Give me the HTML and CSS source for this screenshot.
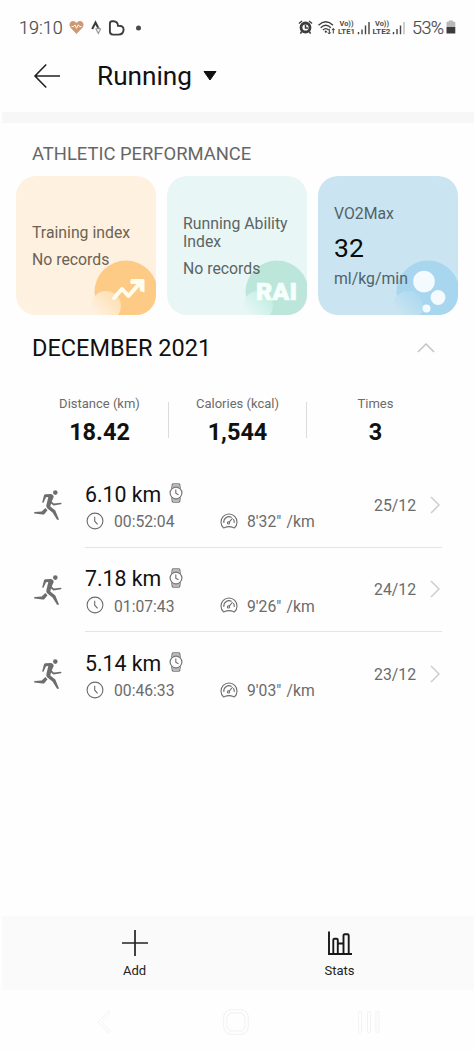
FILE: index.html
```html
<!DOCTYPE html>
<html lang="en">
<head>
<meta charset="utf-8">
<title>Running</title>
<link rel="stylesheet" href="styles.css">
</head>
<body>
<svg class="defs" width="0" height="0" aria-hidden="true">
  <symbol id="runner" viewBox="0 0 30 32">
    <circle cx="22.3" cy="3.6" r="2.3"/>
    <path d="M11 6.300 Q11.500 5.500 12.500 5.300 L17.500 5.100 Q20.500 5.400 20.700 8 L18.700 12.500 L20.800 14.600 L28 13.800 Q29 14.400 28 15.200 L20.500 16.400 L18 14.500 L17.300 17.500 L22.300 21.500 L25.900 30.300 Q25.300 31.400 23.900 30.500 L19.500 23.400 L14.400 19.400 Q12.700 17.700 13.500 15.500 L15.300 8 L13 8.300 L10.600 13.600 Q9.600 14.300 9.200 13.200 Z"/>
    <path d="M12.300 19 L14.500 21.300 L11.500 25 Q10.800 25.700 9.500 25.500 L1.300 24.500 Q.6 23.500 1.600 23 L8.700 22.600 Z"/>
  </symbol>
  <symbol id="watch" viewBox="0 0 14 20">
    <g fill="none" stroke="#777" stroke-width="1.200" stroke-linejoin="round">
      <circle cx="7" cy="10" r="5.900"/>
      <path d="M2.700 5.700 L3.300 1.500 Q3.500.8 4.300.8 H9.700 Q10.500.8 10.700 1.500 L11.300 5.700 M2.700 14.300 L3.300 18.500 Q3.500 19.200 4.300 19.200 H9.700 Q10.500 19.200 10.700 18.500 L11.300 14.300 M4 3 H10 M4 17 H10 M6.800 6.600 V10.200 L9.500 11.800"/>
    </g>
  </symbol>
  <symbol id="clock" viewBox="0 0 18 18">
    <g fill="none" stroke="#6c6c6c" stroke-width="1.100">
      <circle cx="9" cy="9" r="7.900"/>
      <path d="M8.700 4.700 V9.200 L11.600 12.300"/>
    </g>
  </symbol>
  <symbol id="gauge" viewBox="0 0 18 16">
    <g fill="none" stroke="#6c6c6c" stroke-width="1.100" stroke-linecap="round" stroke-linejoin="round">
      <path d="M3.500 14.800 A8 8 0 1 1 14.500 14.800 Q14 15.100 13.300 14.600 Q9 12.700 4.700 14.600 Q4 15.100 3.500 14.800 Z"/>
      <path d="M3.800 9.500 A5.300 5.300 0 0 1 11.300 4.200 M13.600 6.500 A5.300 5.300 0 0 1 14.200 9.500 M9.200 9.100 L12.300 5.500"/>
      <circle cx="8.500" cy="9.900" r="1.100"/>
    </g>
  </symbol>
  <symbol id="chevron" viewBox="0 0 10 18"><path d="M1 1 L9 9 L1 17" fill="none" stroke="#cdcdcd" stroke-width="1.500"/></symbol>
</svg>

<header class="status">
  <span class="time">19:10</span>
  <svg class="notices" width="76" height="20" viewBox="0 0 76 20">
    <path d="M7.500 16 L1.600 9.800 C-1 6 1.500 3 4 3 Q6.200 3 7.500 5 Q8.800 3 11 3 C13.500 3 16 6 13.400 9.800 Z" fill="#cf9872"/>
    <path d="M2.500 8.500 H4.500 L6 7 L7.500 10.300 L9.300 6.800 L10.500 8.500 H12.500" fill="none" stroke="#fff" stroke-width="1"/>
    <path d="M23.200 11 L26.500 4.500 L29.800 11" fill="none" stroke="#3d3d3d" stroke-width="2.100"/>
    <path d="M27 11 L29.300 15.500 L31.500 11 L29.300 10 Z" fill="none" stroke="#999" stroke-width="1.200"/>
    <path d="M40.900 5.600 Q40.900 3.200 43.300 3.200 H44.500 Q48.800 3.400 49 7.700 Q54.600 7.400 54.600 11.600 Q54.300 16.600 49.500 16.600 H44 Q40.900 16.600 40.900 13.500 Z" fill="none" stroke="#3d3d3d" stroke-width="1.900"/>
    <circle cx="69.500" cy="10" r="2.500" fill="#4a4a4a"/>
  </svg>
  <svg class="signals" width="108" height="18" viewBox="0 0 108 18">
    <g fill="none" stroke="#3d3d3d">
      <circle cx="7.500" cy="8.500" r="4.500" stroke-width="2.800"/>
      <path d="M7.500 5.800 V9 H10 M3.700 12.500 L2.400 14.700 M11.300 12.500 L12.600 14.700" stroke-width="1.500"/>
      <path d="M.9 4.500 L4 2 M11 2 L14.100 4.500" stroke-width="1.400"/>
      <path d="M20.500 6.200 Q27.800 -.7 35 6.200 M22.700 8.700 Q27.800 3.800 32.900 8.700 M24.900 11 Q27.800 8.200 30.700 11" stroke-width="1.300"/>
      <path d="M31.300 9.800 V15 M29.900 13.400 L31.300 15 L32.700 13.400 M35.300 14.500 V9.500 M33.900 11.100 L35.300 9.500 L36.700 11.100" stroke-width="1"/>
    </g>
    <circle cx="27.800" cy="12.700" r="1.100" fill="#3d3d3d"/>
    <g class="lte">
      <text x="41.500" y="6.900" textLength="14" lengthAdjust="spacingAndGlyphs">Vo))</text><text x="40" y="15.400" textLength="17" lengthAdjust="spacingAndGlyphs">LTE1</text>
      <text x="77" y="6.900" textLength="14" lengthAdjust="spacingAndGlyphs">Vo))</text><text x="74.500" y="15.400" textLength="18" lengthAdjust="spacingAndGlyphs">LTE2</text>
    </g>
    <path d="M60.500 15.300 V13 M64 15.300 V10.500 M67.500 15.300 V6.500 M71 15.300 V3 M95.500 15.300 V13 M99 15.300 V10 M102.500 15.300 V6.500" stroke="#444" stroke-width="1.400"/>
    <path d="M106 15.300 V3" stroke="#bbb" stroke-width="1.400"/>
  </svg>
  <span class="percent">53%</span>
  <svg class="battery" width="10" height="15" viewBox="0 0 10 15"><path d="M.5 7 V2.500 Q.5 1.700 1.300 1.700 H2.700 V.5 H7 V1.700 H8.500 Q9.300 1.700 9.300 2.500 V7 Z" fill="#b9b9b9"/><path d="M.5 7 H9.300 V13.500 H.5 Z" fill="#3c3c3c"/></svg>
</header>

<nav class="title-bar">
  <svg width="28" height="26" viewBox="0 0 28 26"><path d="M27 13 H2.200 M13.200 1.500 L2 13 L13.200 24.500" fill="none" stroke="#222" stroke-width="1.600"/></svg>
  <h1>Running</h1>
  <svg class="caret" width="14" height="10" viewBox="0 0 14 10"><path d="M1 .5 H13 L7 9 Z" fill="#111" stroke="#111" stroke-linejoin="round"/></svg>
</nav>
<div class="strip"></div>

<main>
  <h2 class="section">ATHLETIC PERFORMANCE</h2>
  <section class="cards">
    <article class="card training">
      <svg class="badge" width="64" height="64" viewBox="0 0 64 64">
        <defs><linearGradient id="warm" x1="1" y1="0" x2="0" y2="1"><stop offset="0" stop-color="#ffdba6"/><stop offset=".8" stop-color="#fef1e0"/></linearGradient></defs>
        <circle cx="32" cy="32" r="31.500" fill="#fdcb86"/>
        <circle cx="12" cy="46" r="15" fill="url(#warm)"/>
        <path d="M20 38 L28 29 L34.500 36 L46 23" fill="none" stroke="#fffdf2" stroke-width="4" stroke-linejoin="round" stroke-linecap="round"/>
        <path d="M37 19 H49 Q50.500 19 50.500 20.500 V32.500 L46 31 L45.500 27 L42 24 H37 Q35.500 21.500 37 19 Z" fill="#fffdf2"/>
      </svg>
      <p>Training index</p><p class="value">No records</p>
    </article>
    <article class="card ability">
      <svg class="badge" width="64" height="64" viewBox="0 0 64 64">
        <defs><linearGradient id="mint" x1="1" y1="0" x2="0" y2="1"><stop offset="0" stop-color="#b8ecdd"/><stop offset=".8" stop-color="#e8f7f6"/></linearGradient></defs>
        <circle cx="32" cy="32" r="31.500" fill="#bce6da"/>
        <circle cx="13" cy="46" r="15" fill="url(#mint)"/>
        <text class="rai" x="11" y="40" textLength="41" lengthAdjust="spacingAndGlyphs">RAI</text>
      </svg>
      <p>Running Ability Index</p><p class="value">No records</p>
    </article>
    <article class="card oxygen">
      <svg class="badge" width="64" height="64" viewBox="0 0 64 64">
        <defs><linearGradient id="sky" x1="1" y1="0" x2="0" y2="1"><stop offset="0" stop-color="#a7d7f0"/><stop offset=".8" stop-color="#cae5f1"/></linearGradient></defs>
        <circle cx="32" cy="32" r="31.500" fill="#a8d6ee"/>
        <circle cx="12" cy="46" r="15" fill="url(#sky)"/>
        <g fill="#f4fbff"><circle cx="28" cy="21.500" r="10.800"/><circle cx="42" cy="37.500" r="7.400"/><circle cx="30.500" cy="48.500" r="4"/></g>
      </svg>
      <p>VO2Max</p><p class="number">32</p><p class="unit">ml/kg/min</p>
    </article>
  </section>

  <section class="month">
    <h2>DECEMBER 2021</h2>
    <svg width="18" height="10" viewBox="0 0 18 10"><path d="M1 9 L9 1 L17 9" fill="none" stroke="#c4c4c4" stroke-width="1.500"/></svg>
  </section>
  <section class="totals">
    <div><span>Distance (km)</span><strong>18.42</strong></div>
    <div><span>Calories (kcal)</span><strong>1,544</strong></div>
    <div><span>Times</span><strong>3</strong></div>
  </section>

  <ul class="runs">
    <li>
      <svg class="runner"><use href="#runner"/></svg>
      <div class="run">
        <div class="info">
          <div class="distance">6.10 km<svg width="14" height="20"><use href="#watch"/></svg></div>
          <div class="metrics"><svg width="18" height="18"><use href="#clock"/></svg><span class="duration">00:52:04</span><svg width="18" height="16"><use href="#gauge"/></svg><span class="pace">8'32" /km</span></div>
        </div>
        <span class="date">25/12</span><svg width="10" height="18"><use href="#chevron"/></svg>
      </div>
    </li>
    <li>
      <svg class="runner"><use href="#runner"/></svg>
      <div class="run">
        <div class="info">
          <div class="distance">7.18 km<svg width="14" height="20"><use href="#watch"/></svg></div>
          <div class="metrics"><svg width="18" height="18"><use href="#clock"/></svg><span class="duration">01:07:43</span><svg width="18" height="16"><use href="#gauge"/></svg><span class="pace">9'26" /km</span></div>
        </div>
        <span class="date">24/12</span><svg width="10" height="18"><use href="#chevron"/></svg>
      </div>
    </li>
    <li>
      <svg class="runner"><use href="#runner"/></svg>
      <div class="run">
        <div class="info">
          <div class="distance">5.14 km<svg width="14" height="20"><use href="#watch"/></svg></div>
          <div class="metrics"><svg width="18" height="18"><use href="#clock"/></svg><span class="duration">00:46:33</span><svg width="18" height="16"><use href="#gauge"/></svg><span class="pace">9'03" /km</span></div>
        </div>
        <span class="date">23/12</span><svg width="10" height="18"><use href="#chevron"/></svg>
      </div>
    </li>
  </ul>
</main>

<footer class="actions">
  <a><svg width="26" height="26" viewBox="0 0 26 26"><path d="M13 0 V26 M0 13 H26" stroke="#222" stroke-width="1.700"/></svg>Add</a>
  <a><svg width="26" height="26" viewBox="0 0 26 26"><path d="M2 1.500 V24 H25 M6.300 23.500 V10 Q6.300 8.700 7.500 8.700 H9.500 Q10.800 8.700 10.800 10 V23.500 M10.800 13.500 H16.500 M16.500 23.500 V5.500 Q16.500 4.200 17.700 4.200 H20.500 Q21.700 4.200 21.700 5.500 V23.500" fill="none" stroke="#181818" stroke-width="1.900"/></svg>Stats</a>
</footer>
<div class="system-nav">
  <svg width="14" height="24" viewBox="0 0 14 24"><path d="M11.500 1 L1 12 L11.500 23 L13 21 L4.500 12 L13 3 Z" fill="none" stroke="#f3f3f3"/></svg>
  <svg class="home" width="26" height="26" viewBox="0 0 26 26"><rect x=".7" y=".7" width="24.600" height="24.600" rx="7.500" fill="none" stroke="#f1f1f1"/><rect x="4" y="4" width="18" height="18" rx="5" fill="none" stroke="#f1f1f1"/></svg>
  <svg width="24" height="24" viewBox="0 0 24 24"><g fill="none" stroke="#f3f3f3"><rect x="1.500" y="1.500" width="3" height="21" rx="1.500"/><rect x="10.500" y="1.500" width="3" height="21" rx="1.500"/><rect x="19" y="1.500" width="3" height="21" rx="1.500"/></g></svg>
</div>
</body>
</html>
```
FILE: styles.css
```css
* { box-sizing: border-box; margin: 0; padding: 0; }
body { width: 474px; height: 1053px; overflow: hidden; background: #fefefe; color: #111; font-family: Roboto, sans-serif; display: flex; flex-direction: column; }
svg { display: block; flex: none; }
h1, h2 { font-weight: 400; }
.defs { position: absolute; }

.status { height: 55px; display: flex; align-items: center; padding: 0 18px 0 19px; color: #4b4b4b; }
.time { width: 50px; font-size: 18px; font-weight: 300; -webkit-text-stroke: .2px; }
.signals { margin-left: auto; }
.lte { font: 700 7.400px Roboto, sans-serif; fill: #4c4c4c; }
.percent { margin: 0 3px 0 6px; width: 31px; font-size: 18px; font-weight: 300; letter-spacing: -.6px; -webkit-text-stroke: .2px; }

.title-bar { height: 57px; display: flex; align-items: center; padding: 0 33px 15px; }
.title-bar h1 { margin-left: 36px; font-size: 26.200px; }
.caret { margin: 0 0 0 11px; }
.strip { height: 11px; background: #f7f7f7; flex: none; margin-left: 2px; }

main { flex: 1; }
.section { height: 53px; padding: 20px 32px 0; font-size: 18.400px; line-height: 22px; color: #666; }
.cards { display: grid; grid-template-columns: repeat(3, 140px); gap: 11px; padding-left: 16px; }
.card { position: relative; height: 139px; border-radius: 20px; overflow: hidden; padding: 2px 16px 0; display: flex; flex-direction: column; justify-content: center; font-size: 15.800px; line-height: 18px; color: #5d6464; }
.card p { position: relative; }
.value { margin-top: 9px; }
.badge { position: absolute; left: 78px; top: 84px; overflow: visible; }
.training { background: #fef1e0; color: #6c6256; }
.ability { background: #e8f7f6; }
.oxygen { background: #cae5f1; color: #526269; }
.number { margin: 9px 0 6px; font-size: 26.500px; line-height: 32px; color: #0a0a0a; }
.rai { font: 900 24px Roboto, sans-serif; fill: #f5fffc; stroke: #f5fffc; stroke-width: .7px; stroke-linejoin: round; }

.month { height: 65px; display: flex; align-items: center; justify-content: space-between; padding: 0 39px 0 32px; }
.month h2 { font-size: 23.500px; }
.totals { height: 83px; padding: 15px 30px 0 31px; display: grid; grid-template-columns: 138px 138px 1fr; }
.totals div { display: flex; flex-direction: column; align-items: center; text-align: center; }
.totals div:not(:last-child) { border-right: 1px solid transparent; border-image: linear-gradient(transparent 8px, #dcdcdc 8px, #dcdcdc 43px, transparent 43px) 1; }
.totals span { font-size: 13px; line-height: 18px; color: #6b6b6b; }
.totals strong { margin-top: 5px; font-size: 23.500px; line-height: 28px; font-weight: 700; }

.runs { list-style: none; }
.runs li { height: 84.500px; display: flex; padding: 0 32px 0 33px; }
.runner { width: 30px; height: 32px; margin: 26px 22px 0 0; fill: #6d6d6d; }
.run { flex: 1; display: flex; align-items: center; border-bottom: 1px solid #e4e4e4; }
li:last-child .run { border-bottom-color: transparent; }
.info { width: 289px; }
.distance { display: flex; align-items: center; gap: 8px; font-size: 21.300px; line-height: 28px; height: 28px; margin-top: 3px; }
.distance svg { margin-top: -3px; }
.metrics { display: flex; align-items: center; height: 20px; margin-top: 3px; padding-left: 1px; font-size: 15.700px; color: #6b6b6b; }
.metrics svg { margin-top: -2px; }
.duration { margin-left: 10px; width: 106px; }
.pace { margin-left: 9px; word-spacing: 1.500px; }
.date { width: 56px; padding-top: 1px; font-size: 15.800px; color: #6b6b6b; }

.actions { height: 74px; margin-left: 2px; background: #fafafa; display: grid; grid-template-columns: 205px 205px; padding: 14px 0 0 30px; }
.actions a { display: flex; flex-direction: column; align-items: center; font-size: 13px; line-height: 16px; gap: 7px; color: #222; }
.system-nav { height: 63px; display: flex; align-items: center; justify-content: space-between; padding: 1px 93px 0 97px; }
.home { margin-left: 4px; }
```
